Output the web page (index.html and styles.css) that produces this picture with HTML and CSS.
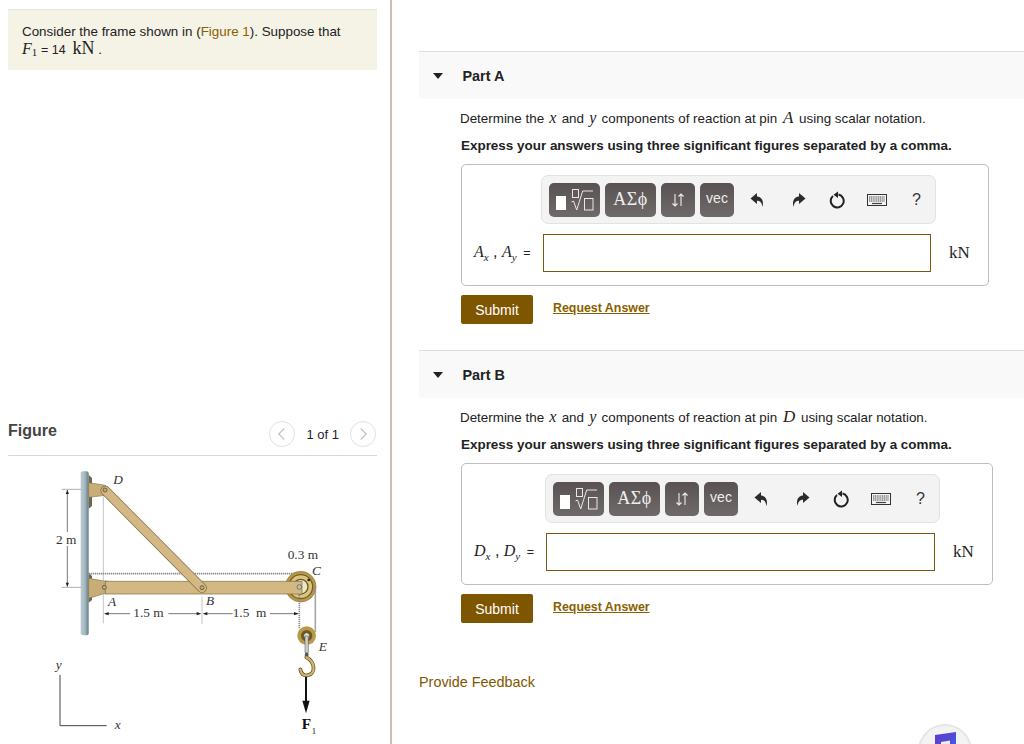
FILE: index.html
```html
<!DOCTYPE html>
<html lang="en">
<head>
<meta charset="utf-8">
<title>Frame reactions</title>
<link rel="stylesheet" href="styles.css">
</head>
<body>
<svg class="sprite" aria-hidden="true">
  <defs>
    <symbol id="i-undo" viewBox="0 0 16 16"><path d="M7 1 0.500 6.500 7 12V8.800c3 0 4.500 1.200 5.500 6.200 1.500-6-.5-10-5.500-10.500z" fill="#2b2b2b"/></symbol>
    <symbol id="i-redo" viewBox="0 0 16 16"><path d="M9 1l6.500 5.500L9 12V8.800C6 8.800 4.500 10 3.500 15 2 9 4 5 9 4.500z" fill="#2b2b2b"/></symbol>
    <symbol id="i-reset" viewBox="0 0 18 18"><path d="M10.500 3.600A6.500 6.500 0 1 1 5 5" fill="none" stroke="#222" stroke-width="2"/><path d="M10 0.500v6.500L5.500 3.800z" fill="#222"/></symbol>
    <symbol id="i-keys" viewBox="0 0 20 12"><rect x=".5" y=".5" width="19" height="11" fill="#f4f4f4" stroke="#333"/><path d="M2 3h16M2 5h16M2 7h16" stroke="#444" stroke-width="1.200" stroke-dasharray="1.200 .6"/><path d="M5 9.500h10" stroke="#444" stroke-width="1.200"/></symbol>
    <symbol id="i-templ" viewBox="0 0 51 34"><rect x="7" y="13" width="10" height="14" fill="#fff"/><path d="M22.500 19l2-1 3.200 9L33.700 8H44" fill="none" stroke="#e8e8e8"/><rect x="23.500" y="6.500" width="6" height="8" fill="#625a5a" stroke="#e8e8e8"/><rect x="35.500" y="15.500" width="8.500" height="11.500" fill="none" stroke="#e8e8e8"/></symbol>
    <symbol id="i-arrows" viewBox="0 0 20 20"><path d="M7 4v12M4.500 13.500 7 16l2.500-2.500M13 16V4M10.500 6.500 13 4l2.500 2.500" fill="none" stroke="#eee" stroke-width="1.100"/></symbol>
    <symbol id="i-prev" viewBox="0 0 26 26"><path d="M15.500 7 9.500 13l6 6" fill="none" stroke="#c4c4c4" stroke-width="1.300"/></symbol>
    <symbol id="i-next" viewBox="0 0 26 26"><path d="M10.500 7l6 6-6 6" fill="none" stroke="#c4c4c4" stroke-width="1.300"/></symbol>
  </defs>
</svg>
<div class="page">
  <aside class="left">
    <div class="intro">
      <p>Consider the frame shown in (<a class="figlink">Figure 1</a>). Suppose that<br>
      <span class="m mi">F</span><span class="sub1">1</span> <span class="eq">= 14</span> <span class="m kn">kN</span> .</p>
    </div>
    <div class="fig-head">
      <h2>Figure</h2>
      <div class="pager">
        <svg class="circ"><use href="#i-prev"/></svg>
        <span class="count">1 of 1</span>
        <svg class="circ"><use href="#i-next"/></svg>
      </div>
    </div>
    <svg class="diagram" viewBox="0 0 900 852" role="img" aria-label="Frame diagram">
      <defs>
        <linearGradient id="wall" x1="0" x2="1" y1="0" y2="0">
          <stop offset="0" stop-color="#bccbd0"/><stop offset=".55" stop-color="#a2b7bf"/><stop offset="1" stop-color="#5f7a84"/>
        </linearGradient>
      </defs>
      <rect x="122" y="34" width="24" height="492" rx="6" fill="url(#wall)"/>
      <g fill="#6d6650">
        <path d="M146 44l10 10v84l-10 8zM146 338l10 10v72l-10 8z"/>
      </g>
      <path d="M146 68l50 8q16 14 0 30l-50 6z" fill="#c9ad76" stroke="#8a7545" stroke-width="2"/>
      <path d="M146 355l46 8h10q16 18 0 38h-10l-46 14z" fill="#c9ad76" stroke="#8a7545" stroke-width="2"/>
      <path d="M190 110v380" stroke="#a9a9a9" stroke-width="2" fill="none"/>
      <path d="M486 410v82" stroke="#a9a9a9" stroke-width="2" fill="none"/>
      <path d="M65 88h58M65 382h58" stroke="#888" stroke-width="2" fill="none"/>
      <path d="M82 90v126M82 258v122" stroke="#333" stroke-width="2" fill="none"/>
      <path d="M82 90l-5 12h10zM82 380l-5-12h10z" fill="#222"/>
      <path d="M146 341h634" stroke="#8c8c8c" stroke-width="5" stroke-dasharray="4 2" fill="none"/>
      <circle cx="782" cy="380" r="46" fill="#b8964a" stroke="#8c7a3c" stroke-width="2"/>
      <circle cx="782" cy="380" r="36" fill="#d9c583" stroke="#7a5f22" stroke-width="4"/>
      <circle cx="782" cy="380" r="22" fill="#efe6c4" stroke="#6d5a24" stroke-width="4"/>
      <path d="M196 364h590v38H196z" fill="#d3b883" stroke="#7a6a3e" stroke-width="2"/>
      <path d="M196 92 486 384" stroke="#7a6a3e" stroke-width="29" stroke-linecap="round" fill="none"/>
      <path d="M196 92 486 384" stroke="#d3b883" stroke-width="25" stroke-linecap="round" fill="none"/>
      <g fill="#c2ac79" stroke="#575135" stroke-width="2.500">
        <circle cx="195" cy="90" r="6"/><circle cx="193" cy="382" r="6"/><circle cx="486" cy="383" r="6"/>
      </g>
      <circle cx="778" cy="381" r="7" fill="#bfbfb8" stroke="#555" stroke-width="2"/>
      <circle cx="806" cy="360" r="4" fill="#222"/>
      <path d="M778 404v104M826 382v134" stroke="#8c8c8c" stroke-width="5" stroke-dasharray="4 2" fill="none"/>
      <circle cx="800" cy="527" r="28" fill="#b89a4a"/>
      <circle cx="800" cy="527" r="17" fill="#705a1f"/>
      <circle cx="800" cy="527" r="9" fill="#e8e3cc" stroke="#333" stroke-width="2"/>
      <path d="M795 528v50h10v-50z" fill="#cfcfcb" stroke="#444" stroke-width="1.500"/>
      <circle cx="800" cy="584" r="6" fill="#555"/>
      <path d="M799 592C824 604 830 640 803 646 790 649 783 640 781 628" fill="none" stroke="#4f431c" stroke-width="11" stroke-linecap="round"/>
      <path d="M799 592C824 604 830 640 803 646 790 649 783 640 781 628" fill="none" stroke="#d2b566" stroke-width="7" stroke-linecap="round"/>
      <path d="M798 650v82" stroke="#111" stroke-width="6" fill="none"/>
      <path d="M798 760l-11-38h22z" fill="#111"/>
      <path d="M60 645v152h140" stroke="#444" stroke-width="3" fill="none"/>
      <path d="M196 461H270M385 461h88M500 461h78M690 461h84" stroke="#333" stroke-width="2" fill="none"/>
      <path d="M192 461l14-5v10zM484 461l-14-5v10zM488 461l14-5v10zM776 461l-14-5v10z" fill="#222"/>
      <g class="dlabel">
        <text x="48" y="253">2 m</text>
        <text x="280" y="470">1.5 m</text>
        <text x="578" y="470">1.5&#160; m</text>
        <text x="743" y="297">0.3 m</text>
      </g>
      <g class="dvar">
        <text x="220" y="72">D</text>
        <text x="204" y="438">A</text>
        <text x="498" y="435">B</text>
        <text x="816" y="346">C</text>
        <text x="836" y="574">E</text>
        <text x="47" y="626">y</text>
        <text x="224" y="806">x</text>
      </g>
      <text class="dforce" x="785" y="806">F</text>
      <text class="dforcesub" x="815" y="822">1</text>
    </svg>
  </aside>
  <main class="right">
    <section class="part part-a">
      <header class="band"><span class="caret"></span><h3>Part A</h3></header>
      <p class="desc">Determine the <span class="m mi">x</span> and <span class="m mi">y</span> components of reaction at pin <span class="m mi big">A</span> using scalar notation.</p>
      <p class="strong">Express your answers using three significant figures separated by a comma.</p>
      <div class="box">
        <div class="toolbar">
          <span class="btn b-templ"><svg class="ic-templ"><use href="#i-templ"/></svg></span>
          <span class="btn b-greek">&#913;&#931;&#981;</span>
          <span class="btn b-arrows"><svg class="ic-arrows"><use href="#i-arrows"/></svg></span>
          <span class="btn b-vec">vec</span>
          <svg class="tool ic-undo"><use href="#i-undo"/></svg>
          <svg class="tool ic-redo"><use href="#i-redo"/></svg>
          <svg class="tool ic-reset"><use href="#i-reset"/></svg>
          <svg class="tool ic-keys"><use href="#i-keys"/></svg>
          <span class="help">?</span>
        </div>
        <div class="answer">
          <span class="lab"><span class="m mi">A<sub>x</sub></span> , <span class="m mi">A<sub>y</sub></span> <span class="eq">=</span></span>
          <input class="field" type="text" aria-label="answer A">
          <span class="m unit">kN</span>
        </div>
      </div>
      <div class="actions"><button class="submit">Submit</button><a class="req">Request Answer</a></div>
    </section>
    <section class="part part-b">
      <header class="band"><span class="caret"></span><h3>Part B</h3></header>
      <p class="desc">Determine the <span class="m mi">x</span> and <span class="m mi">y</span> components of reaction at pin <span class="m mi big">D</span> using scalar notation.</p>
      <p class="strong">Express your answers using three significant figures separated by a comma.</p>
      <div class="box">
        <div class="toolbar">
          <span class="btn b-templ"><svg class="ic-templ"><use href="#i-templ"/></svg></span>
          <span class="btn b-greek">&#913;&#931;&#981;</span>
          <span class="btn b-arrows"><svg class="ic-arrows"><use href="#i-arrows"/></svg></span>
          <span class="btn b-vec">vec</span>
          <svg class="tool ic-undo"><use href="#i-undo"/></svg>
          <svg class="tool ic-redo"><use href="#i-redo"/></svg>
          <svg class="tool ic-reset"><use href="#i-reset"/></svg>
          <svg class="tool ic-keys"><use href="#i-keys"/></svg>
          <span class="help">?</span>
        </div>
        <div class="answer">
          <span class="lab"><span class="m mi">D<sub>x</sub></span> , <span class="m mi">D<sub>y</sub></span> <span class="eq">=</span></span>
          <input class="field" type="text" aria-label="answer D">
          <span class="m unit">kN</span>
        </div>
      </div>
      <div class="actions"><button class="submit">Submit</button><a class="req">Request Answer</a></div>
    </section>
    <a class="feedback">Provide Feedback</a>
  </main>
</div>
<div class="fab"><svg class="fab-ic" viewBox="0 0 21 13"><defs><linearGradient id="fabg" x1="0" x2="1" y1="0" y2="1"><stop offset="0" stop-color="#6a35c8"/><stop offset="1" stop-color="#3f5be0"/></linearGradient></defs><path d="M0 3 21 0v13H0z" fill="url(#fabg)"/><path d="M6 10l9-1.500V13H6z" fill="#ececf2"/></svg></div>
</body>
</html>
```
FILE: styles.css
```css
* { box-sizing: border-box; }
html, body { margin: 0; height: 744px; overflow: hidden; background: #fff; }
body { font-family: "Liberation Sans", Arial, sans-serif; color: #222; position: relative; }
.sprite { width: 0; height: 0; position: absolute; }
.page { display: grid; grid-template-columns: 392px 1fr; height: 744px; }

.left { border-right: 2px solid #c8c0b8; padding: 9px 13px 0 8px; height: 744px; overflow: hidden; }
.intro { background: #f5f3e6; border-top: 1px solid #e4e4e0; height: 61px; padding: 14px 14px 0; }
.intro p { margin: 0; font-size: 13.400px; line-height: 16px; white-space: nowrap; }
.figlink { color: #8a5f00; }
.m { font-family: "Liberation Serif", "Times New Roman", serif; }
.mi { font-style: italic; }
.intro .m { font-size: 16px; }
.intro .kn { font-size: 18px; margin-left: 3px; }
.sub1 { font-size: 11px; font-family: "Liberation Serif", serif; position: relative; top: 2px; }
.eq { font-size: 12.500px; font-family: "Liberation Sans", sans-serif; }

.fig-head { display: flex; align-items: center; justify-content: space-between; margin-top: 345px; height: 41px; border-bottom: 1px solid #d8d8d8; padding-bottom: 2px; }
.fig-head h2 { margin: -6px 0 0; font-size: 16px; font-weight: bold; color: #444; }
.pager { display: flex; align-items: center; margin-right: 1px; gap: 11px; }
.circ { width: 26px; height: 26px; border: 1px solid #e2e2e2; border-radius: 50%; }
.count { font-size: 13px; color: #222; }
.diagram { display: block; width: 300px; height: 284px; margin: 4px 0 0 32px; }
.dlabel text { font: 40px "Liberation Serif", serif; fill: #333; }
.dvar text { font: italic 40px "Liberation Serif", serif; fill: #333; }
.dforce { font: bold 46px "Liberation Serif", serif; fill: #111; }
.dforcesub { font: 26px "Liberation Serif", serif; fill: #111; }

.right { padding: 51px 0 0 27px; display: flex; flex-direction: column; min-width: 0; }
.part { display: block; }
.part-a { height: 299px; }
.part-b { height: 299px; }
.band { display: flex; align-items: center; height: 48px; background: #f9f9f9; border-top: 1px solid #ddd; padding-left: 14px; }
.caret { width: 0; height: 0; border-left: 5.500px solid transparent; border-right: 5.500px solid transparent; border-top: 6px solid #222; margin-right: 19.500px; }
.band h3 { margin: 0; font-size: 14.400px; font-weight: bold; color: #222; }
.desc { margin: 10px 0 0 41px; font-size: 13.400px; line-height: 17px; height: 17px; white-space: nowrap; }
.desc .m { font-size: 16px; margin: 0 1.500px; }
.desc .big { font-size: 17px; margin: 0 2px; }
.strong { margin: 10.500px 0 0 42px; font-size: 13.450px; font-weight: bold; line-height: 17px; white-space: nowrap; }
.box { margin: 10.500px 0 0 42px; height: 122px; width: 528px; border: 1px solid #bdbdbd; border-radius: 5px; padding-top: 10px; }
.part-b .box { width: 532px; }
.toolbar { display: flex; align-items: center; height: 49px; width: 395px; margin-left: 79px; background: #f3f3f3; border: 1px solid #e2e2e2; border-radius: 7px; padding-left: 7px; }
.part-b .toolbar { margin-left: 83px; }
.btn { display: flex; align-items: center; justify-content: center; height: 34px; border-radius: 5px; background: linear-gradient(#5a5252, #6f6a6a); color: #eee; }
.b-templ { width: 51px; }
.b-greek { width: 51px; margin-left: 5px; font: 18px "Liberation Serif", serif; letter-spacing: .5px; }
.b-arrows { width: 34px; margin-left: 5px; }
.b-vec { width: 34px; margin-left: 5px; font-size: 14px; padding-bottom: 4px; }
.ic-templ { width: 51px; height: 34px; }
.ic-arrows { width: 20px; height: 20px; }
.tool { flex: none; }
.ic-undo { width: 16px; height: 16px; margin-left: 16px; }
.ic-redo { width: 16px; height: 16px; margin-left: 24px; }
.ic-reset { width: 18px; height: 18px; margin-left: 22px; }
.ic-keys { width: 20px; height: 12px; margin-left: 21px; }
.help { font-size: 16px; margin-left: 25px; color: #333; }
.answer { display: flex; align-items: center; margin-top: 10px; padding-left: 12px; }
.lab { font-size: 16px; flex: none; width: 69px; white-space: nowrap; }
.part-b .lab { width: 72px; }
.lab sub { font-size: 11px; }
.lab .eq { font-size: 12.500px; margin-left: 2px; }
.field { width: 388px; height: 38px; border: 1px solid #7a5a10; background: #fff; flex: none; }
.part-b .field { width: 389px; }
.unit { margin-left: 18px; font-size: 17px; }
.actions { display: flex; align-items: center; margin: 9px 0 0 42px; }
.submit { width: 72px; height: 29px; border: 0; border-radius: 2px; background: #7f5600; color: #fff; font: 14px "Liberation Sans", sans-serif; padding: 0; }
.req { margin: -3px 0 0 20px; font-size: 12.400px; font-weight: bold; color: #8a5f00; text-decoration: underline; }
.feedback { margin-top: 25px; font-size: 14.400px; color: #7f5600; line-height: 17px; }

.fab { position: absolute; left: 918px; top: 724px; width: 54px; height: 54px; border-radius: 50%; background: #f3f3f3; border: 2px solid #e6e6e6; display: flex; justify-content: center; padding-top: 6px; }
.fab-ic { width: 21px; height: 13px; }
```
